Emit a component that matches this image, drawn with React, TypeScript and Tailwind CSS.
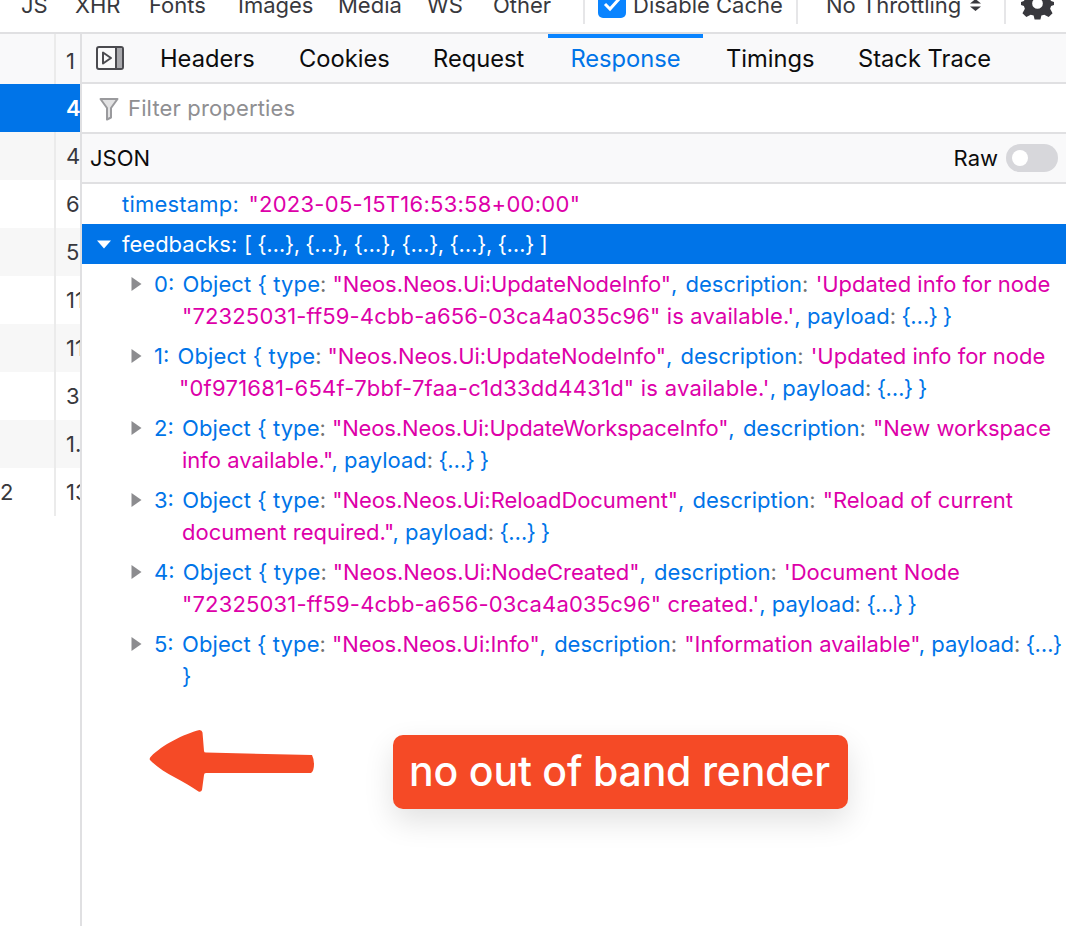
const font = { fontFamily: "Inter, 'Noto Sans', sans-serif" };

type Tok = [string, "k" | "s" | "g", string?];

const tone = { k: "text-[#0074e8]", s: "text-[#dd00a9]", g: "text-[#737373]" };

function Line({ toks }: { toks: Tok[] }) {
  return (
    <div className="h-8 whitespace-pre leading-8">
      {toks.map((t, i) => (
        <span key={i} className={`${tone[t[1]]} ${t[2] ?? ""}`}>
          {t[0]}
        </span>
      ))}
    </div>
  );
}

const payloadEnd: Tok[] = [
  ["payload", "k"],
  [":", "g"],
  [" {…} }", "k", "tracking-[-0.7px]"],
];

function head(n: number, type: string, desc: string, typeTrack = "tracking-[-0.07px]"): Tok[] {
  return [
    [`${n}:`, "k"],
    [" Object { type", "k", "ml-[2px] tracking-[0.1px]"],
    [":", "g"],
    [` "${type}"`, "s", typeTrack],
    [", ", "k"],
    ["description", "k", "ml-[2px]"],
    [":", "g"],
    [` ${desc}`, "s", "ml-[1px]"],
  ];
}

const entries: { first: Tok[]; second: Tok[]; indent: string }[] = [
  {
    first: head(0, "Neos.Neos.Ui:UpdateNodeInfo", "'Updated info for node"),
    second: [
      ['"72325031-ff59-4cbb-a656-03ca4a035c96" is available.\'', "s", "tracking-[0.15px]"],
      [", ", "k"],
      ...payloadEnd,
    ],
    indent: "pl-[28px]",
  },
  {
    first: head(1, "Neos.Neos.Ui:UpdateNodeInfo", "'Updated info for node"),
    second: [
      ['"0f971681-654f-7bbf-7faa-c1d33dd4431d" is available.\'', "s", "tracking-[0.24px]"],
      [", ", "k"],
      ...payloadEnd,
    ],
    indent: "pl-[25px]",
  },
  {
    first: head(2, "Neos.Neos.Ui:UpdateWorkspaceInfo", '"New workspace', "tracking-[-0.13px]"),
    second: [['info available."', "s"], [", ", "k"], ...payloadEnd],
    indent: "pl-[28px]",
  },
  {
    first: head(3, "Neos.Neos.Ui:ReloadDocument", '"Reload of current'),
    second: [['document required."', "s"], [", ", "k"], ...payloadEnd],
    indent: "pl-[28px]",
  },
  {
    first: head(4, "Neos.Neos.Ui:NodeCreated", "'Document Node"),
    second: [
      ['"72325031-ff59-4cbb-a656-03ca4a035c96" created.\'', "s", "tracking-[0.17px]"],
      [", ", "k"],
      ...payloadEnd,
    ],
    indent: "pl-[28px]",
  },
  {
    first: [
      ...head(5, "Neos.Neos.Ui:Info", '"Information available"'),
      [", ", "k"],
      ["payload", "k"],
      [":", "g"],
      [" {…}", "k", "tracking-[-0.7px]"],
    ],
    second: [["}", "k"]],
    indent: "pl-[28px]",
  },
];

const rows = [
  { v: "4", bg: "bg-[#0074e8]", b: "" },
  { v: "4", bg: "bg-[#f7f7f7]", b: "" },
  { v: "6", bg: "bg-white", b: "" },
  { v: "5", bg: "bg-[#f7f7f7]", b: "" },
  { v: "11", bg: "bg-white", b: "" },
  { v: "11", bg: "bg-[#f7f7f7]", b: "" },
  { v: "3", bg: "bg-white", b: "" },
  { v: "1.", bg: "bg-[#f7f7f7]", b: "" },
  { v: "13", bg: "bg-white", b: "2" },
];

const tabs = [
  { label: "Headers", w: "w-[139px] pl-[16px]" },
  { label: "Cookies", w: "w-[134px] pl-[16px]" },
  { label: "Request", w: "w-[131px] pl-[16px]" },
  { label: "Response", w: "w-[155px] justify-center", on: true },
  { label: "Timings", w: "w-[132px] pl-[23px]" },
  { label: "Stack Trace", w: "w-[150px] pl-[23px]" },
];

const filters = [
  ["JS", "w-[54px]"],
  ["XHR", "w-[74px]"],
  ["Fonts", "w-[89px]"],
  ["Images", "w-[100px]"],
  ["Media", "w-[89px]"],
  ["WS", "w-[66px]"],
  ["Other", "w-[90px]"],
];

function Toolbar() {
  return (
    <div className="flex h-8 shrink-0 items-end overflow-hidden bg-white text-[22px] text-[#38383d]">
      <div className="flex h-[54px] items-center pl-[21px]">
        {filters.map(([f, w]) => (
          <span key={f} className={`${w} shrink-0`}>
            {f}
          </span>
        ))}
      </div>
      <div className="mb-[8px] h-[24px] w-[2px] shrink-0 bg-[#e6e6e8]" />
      <div className="flex h-[54px] items-center pl-[13px]">
        <span className="mb-[2px] flex h-[28px] w-[28px] shrink-0 items-center justify-center rounded-[5px] bg-[#0a84ff]">
          <svg width="22" height="22" viewBox="0 0 22 22" fill="none">
            <path d="M4 11l5 5 9-10" stroke="#fff" strokeWidth="3" />
          </svg>
        </span>
        <span className="ml-[7px] w-[163px] shrink-0">Disable Cache</span>
      </div>
      <div className="mb-[8px] h-[24px] w-[2px] shrink-0 bg-[#e6e6e8]" />
      <div className="flex h-[54px] items-center pl-[28px]">
        <span className="shrink-0">No Throttling</span>
        <svg className="ml-[9px] shrink-0" width="11" height="14" viewBox="0 0 11 14" fill="#38383d">
          <path d="M0 5.500L5.500 1l5.500 4.500zM0 8.500h11L5.500 13z" />
        </svg>
      </div>
      <div className="mb-[8px] ml-[23px] h-[24px] w-[2px] shrink-0 bg-[#e6e6e8]" />
      <svg className="mb-[12px] ml-[15px] shrink-0" width="33" height="34" viewBox="0 0 34 34" fill="#38383d">
        <path d="M14 1h6l1 5 3 1.500 4.500-2.500 4 4-2.500 4.500L31 15l3 1v3l-3 1-1 3 2.500 4.500-4 4-4.500-2.500-3 1-1 4h-6l-1-4-3-1-4.500 2.500-4-4L4 23l-1-3-3-1v-3l3-1 1-2-2.500-4.500 4-4L10 7.500 13 6zM17 12a5.500 5.500 0 100 11 5.500 5.500 0 000-11z" fillRule="evenodd" />
      </svg>
    </div>
  );
}

function RequestList() {
  return (
    <div className="w-[80px] shrink-0">
      <div className="flex h-[50px] bg-[#f9f9fa]">
        <div className="w-[56px] shrink-0 border-r-2 border-[#ebebeb]" />
        <div className="flex-1 overflow-hidden pl-[10px] pt-[11px] text-[#38383d]">1</div>
      </div>
      {rows.map((r, i) => (
        <div key={i} className={`flex h-12 ${r.bg}`}>
          <div
            className={`w-[56px] shrink-0 leading-[48px] text-[#38383d] ${
              i === 0 ? "" : "border-r-2 border-[#ebebeb]"
            }`}
          >
            {r.b}
          </div>
          <div
            className={`w-[24px] overflow-hidden pl-[10px] leading-[48px] whitespace-nowrap ${
              i === 0 ? "font-semibold text-white" : "text-[#38383d]"
            }`}
          >
            {r.v}
          </div>
        </div>
      ))}
    </div>
  );
}

function Detail() {
  return (
    <div className="flex min-w-0 flex-1 flex-col border-l-2 border-[#e0e0e2]">
      <div className="flex h-[50px] shrink-0 items-stretch border-b-2 border-[#e0e0e2] bg-[#f9f9fa] text-[23.7px]">
        <div className="flex w-[62px] shrink-0 items-center pl-[14px]">
          <svg width="28" height="24" viewBox="0 0 28 24" fill="none">
            <rect x="1" y="1" width="26" height="22" rx="2" stroke="#4a4a4f" strokeWidth="2" />
            <rect x="21" y="2" width="5" height="20" fill="#a8a8ac" />
            <path d="M20 2v20" stroke="#4a4a4f" strokeWidth="2" />
            <path d="M7 6.500v11l8-5.500z" stroke="#4a4a4f" strokeWidth="2" strokeLinejoin="round" />
          </svg>
        </div>
        {tabs.map((t) => (
          <div
            key={t.label}
            className={`relative flex shrink-0 items-center whitespace-nowrap pt-[1px] ${t.on ? "text-[#0074e8]" : "text-[#0c0c0d]"} ${t.w}`}
          >
            {t.on && <div className="absolute top-0 left-0 h-1 w-full bg-[#0a84ff]" />}
            {t.label}
          </div>
        ))}
      </div>
      <div className="flex h-[50px] shrink-0 items-center border-b-2 border-[#e0e0e2] pl-[17px] tracking-[0.15px] text-[#8f8f92]">
        <svg className="mr-[9px] mt-[2px]" width="20" height="24" viewBox="0 0 20 24" fill="none">
          <path d="M1.500 2h17L12 11v9.500l-4 2V11z" fill="#e2e2e3" stroke="#9a9a9d" strokeWidth="2" strokeLinejoin="round" />
        </svg>
        Filter properties
      </div>
      <div className="flex h-[50px] shrink-0 items-center justify-between border-b-2 border-[#e0e0e2] bg-[#f9f9fa] pl-[8px] pr-[8px] text-[#0c0c0d]">
        <span>JSON</span>
        <div className="flex items-center">
          <span className="mr-[8px]">Raw</span>
          <div className="flex h-7 w-[52px] items-center rounded-full bg-[#d7d7db] pl-[6px]">
            <div className="h-4 w-4 rounded-full bg-white" />
          </div>
        </div>
      </div>
      <div className="h-[40px] shrink-0 whitespace-pre pl-[40px] leading-[40px]">
        <span className="tracking-[0.2px] text-[#0074e8]">timestamp:</span>
        <span className="ml-[3px] tracking-[0.27px] text-[#dd00a9]">{' "2023-05-15T16:53:58+00:00"'}</span>
      </div>
      <div className="flex h-[40px] shrink-0 items-center whitespace-pre bg-[#0074e8] pl-[14px] text-white">
        <svg className="mr-[10px]" width="16" height="12" viewBox="0 0 16 12" fill="#fff">
          <path d="M1 2.500h14L8 10.500z" />
        </svg>
        <span>feedbacks:</span>
        <span className="ml-[1px] tracking-[-0.45px]">{" [ {…}, {…}, {…}, {…}, {…}, {…} ]"}</span>
      </div>
      <div className="pt-[4px]">
        {entries.map((e, i) => (
          <div key={i} className="mb-2 flex h-16 pl-[48px]">
            <svg className="mr-[12px] mt-[8px] shrink-0" width="12" height="16" viewBox="0 0 12 16" fill="#8c8c8f">
              <path d="M1.500 1v14L11.500 8z" />
            </svg>
            <div className="min-w-0">
              <Line toks={e.first} />
              <div className={e.indent}>
                <Line toks={e.second} />
              </div>
            </div>
          </div>
        ))}
      </div>
    </div>
  );
}

export default function App() {
  return (
    <div className="relative flex h-[926px] w-[1066px] flex-col overflow-hidden bg-white text-[22px]" style={font}>
      <Toolbar />
      <div className="h-[2px] shrink-0 bg-[#e0e0e2]" />
      <div className="flex min-h-0 flex-1">
        <RequestList />
        <Detail />
      </div>

      {/* annotation arrow */}
      <svg className="absolute left-[148px] top-[729px]" width="168" height="64" viewBox="0 0 168 64" fill="#f54a26">
        <path d="M2 31Q1 29.500 3 27.500C14 16 36 5 51.500 1Q54 1 54.500 3.500L56 22Q56 23.500 58 23.500L164 26Q166 30 166 35Q166 42 163 44L58 44Q56 44 56 46L54 61Q53 63.500 50.500 62.500C38 53 14 44 2 31Z" />
      </svg>

      <div className="absolute left-[393px] top-[735px] flex h-[74px] w-[455px] items-center justify-center rounded-[10px] bg-[#f54a26] pr-[2px] text-[41px] font-medium tracking-[-0.2px] whitespace-nowrap text-white shadow-[0_12px_30px_rgba(0,0,0,0.12)]">
        no out of band render
      </div>
    </div>
  );
}
